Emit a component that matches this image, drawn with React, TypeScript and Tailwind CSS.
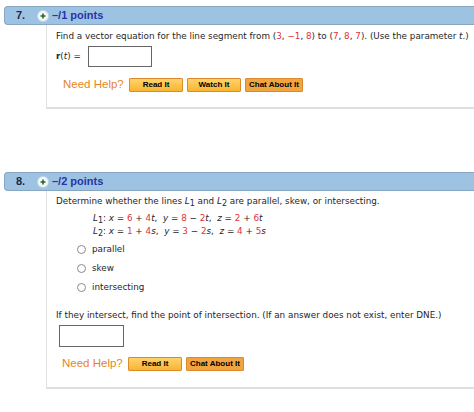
import React from "react";

const R = ({ children }: { children: React.ReactNode }) => (
  <span className="text-[#e2323a]">{children}</span>
);

const I = ({ children }: { children: React.ReactNode }) => <i>{children}</i>;

const PlusIcon = () => (
  <span className="flex h-[10px] w-[10px] items-center justify-center rounded-full bg-[#f4f8fb] shadow-[0_0_0_1px_#c4d6e6]">
    <svg width="6" height="6" viewBox="0 0 6 6">
      <path d="M3 0.5v5M0.5 3h5" stroke="#1f6e1f" strokeWidth="1.6" />
    </svg>
  </span>
);

const Header = ({ num, points }: { num: string; points: string }) => (
  <div className="flex h-[19px] items-center rounded-l-[4px] border border-r-0 border-[#86a6c2] bg-[#9ec3e2] pl-[11px] font-['Liberation_Sans',Arial,sans-serif] text-[11px] font-bold">
    <span className="w-[22px] text-[#1b2a4a]">{num}</span>
    <PlusIcon />
    <span className="ml-[4px] text-[#2734a8]">{points}</span>
  </div>
);

const HelpButton = ({ label, dark }: { label: string; dark?: boolean }) => (
  <button
    type="button"
    className={
      dark
        ? "h-[14px] whitespace-nowrap rounded-[1px] border border-[#d98a2a] bg-[#f0a540] px-[3px] font-['Liberation_Sans',Arial,sans-serif] text-[8px] leading-none font-bold text-black"
        : "h-[14px] w-[54px] whitespace-nowrap rounded-[1px] border border-[#d98a2a] bg-gradient-to-b from-[#ffd36a] to-[#f8b52e] font-['Liberation_Sans',Arial,sans-serif] text-[8px] leading-none font-bold text-black"
    }
  >
    {label}
  </button>
);

const NeedHelp = ({ buttons }: { buttons: { label: string; dark?: boolean }[] }) => (
  <div className="flex items-center">
    <span className="w-[66px] whitespace-nowrap font-['Liberation_Sans',Arial,sans-serif] text-[11.5px] leading-none text-[#e8841e]">
      Need Help?
    </span>
    <div className="flex gap-[4px]">
      {buttons.map((b) => (
        <HelpButton key={b.label} label={b.label} dark={b.dark} />
      ))}
    </div>
  </div>
);

const Radio = ({ label }: { label: string }) => (
  <div className="flex items-center gap-[6px]">
    <span className="h-[9px] w-[9px] rounded-full border border-[#8a8a8a] bg-white" />
    <span>{label}</span>
  </div>
);

export default function App() {
  return (
    <div className="h-[412px] w-[474px] overflow-hidden bg-white pt-[6px] pl-[4px] font-['DejaVu_Sans',Verdana,sans-serif] text-[8.8px] text-[#262626]">
      <Header num="7." points="–/1 points" />
      <div className="ml-[42px] h-[84px] border-b-2 border-l border-[#e0e0e0] pt-[5px] pl-[9px]">
        <p className="whitespace-nowrap leading-[12px]">
          Find a vector equation for the line segment from (<R>3</R>, <R>−1</R>, <R>8</R>) to (<R>7</R>,{" "}
          <R>8</R>, <R>7</R>). (Use the parameter <I>t</I>.)
        </p>
        <div className="mt-[4px] flex items-center gap-[7px]">
          <span>
            <b>r</b>(<I>t</I>) =
          </span>
          <span className="h-[21px] w-[64px] border border-[#666] bg-white" />
        </div>
        <div className="mt-[11px] ml-[7px]">
          <NeedHelp buttons={[{ label: "Read It" }, { label: "Watch It" }, { label: "Chat About It", dark: true }]} />
        </div>
      </div>

      <div className="mt-[63px]">
        <Header num="8." points="–/2 points" />
      </div>
      <div className="ml-[42px] h-[198px] border-b-2 border-l border-[#e0e0e0] pt-[4px] pl-[9px]">
        <p className="whitespace-nowrap leading-[12px]">
          Determine whether the lines <I>L</I>
          <sub className="text-[8px]">1</sub> and <I>L</I>
          <sub className="text-[8px]">2</sub> are parallel, skew, or intersecting.
        </p>
        <div className="mt-[5px] ml-[37px] whitespace-nowrap leading-[13px]">
          <div>
            <I>L</I>
            <sub className="text-[8px]">1</sub>: <I>x</I> = <R>6</R> + <R>4</R>
            <I>t</I>,&nbsp; <I>y</I> = <R>8</R> − <R>2</R>
            <I>t</I>,&nbsp; <I>z</I> = <R>2</R> + <R>6</R>
            <I>t</I>
          </div>
          <div>
            <I>L</I>
            <sub className="text-[8px]">2</sub>: <I>x</I> = <R>1</R> + <R>4</R>
            <I>s</I>,&nbsp; <I>y</I> = <R>3</R> − <R>2</R>
            <I>s</I>,&nbsp; <I>z</I> = <R>4</R> + <R>5</R>
            <I>s</I>
          </div>
        </div>
        <div className="mt-[5px] ml-[21px] flex flex-col gap-[7px] leading-[12px]">
          <Radio label="parallel" />
          <Radio label="skew" />
          <Radio label="intersecting" />
        </div>
        <p className="mt-[16px] whitespace-nowrap leading-[12px]">
          If they intersect, find the point of intersection. (If an answer does not exist, enter DNE.)
        </p>
        <span className="mt-[4px] ml-[3px] block h-[22px] w-[65px] border border-[#666] bg-white" />
        <div className="mt-[10px] ml-[6px]">
          <NeedHelp buttons={[{ label: "Read It" }, { label: "Chat About It", dark: true }]} />
        </div>
      </div>
    </div>
  );
}
